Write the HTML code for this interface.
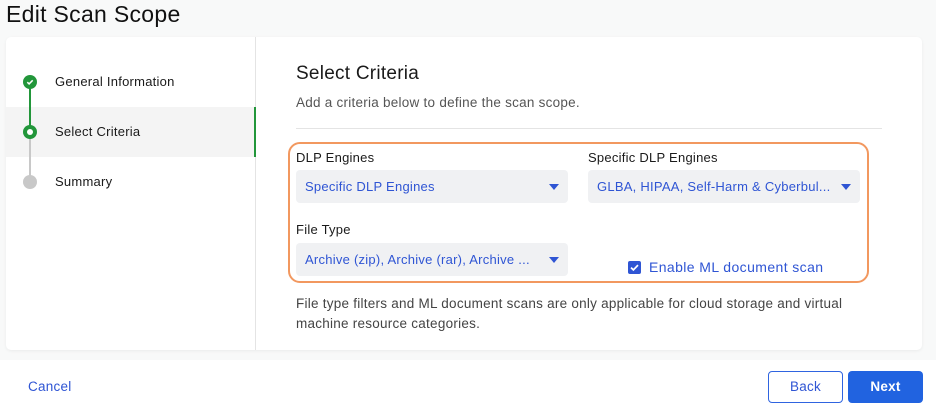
<!DOCTYPE html>
<html><head><style>
*{box-sizing:border-box;margin:0;padding:0}
body{width:936px;height:408px;background:#fff;font-family:"Liberation Sans",sans-serif;color:#1a1a1a;position:relative;overflow:hidden;letter-spacing:0.25px}
.bg{position:absolute;left:0;top:0;width:936px;height:360px;background:#f8f9f9}
h1{position:absolute;left:6px;top:1px;font-size:23px;font-weight:400;color:#111;letter-spacing:0.3px}
.card{position:absolute;left:6px;top:37px;width:916px;height:313px;background:#fff;border-radius:5px;box-shadow:0 1px 3px rgba(0,0,0,.06)}
.side{position:absolute;left:0;top:0;width:250px;height:313px;border-right:1px solid #e4e4e4}
.step{position:absolute;left:0;width:250px;height:50px;font-size:13px;line-height:50px;padding-left:49px}
.active{background:#f4f4f4;border-right:2px solid #22963a}
.dot{position:absolute;left:17px;width:14px;height:14px;border-radius:50%}
.line{position:absolute;left:23px;width:2px}
h2{position:absolute;left:290px;top:26px;font-size:19px;font-weight:400}
.sub{position:absolute;left:290px;top:58px;font-size:13.5px;color:#555}
.hr{position:absolute;left:290px;top:91px;width:586px;height:1px;background:#e4e4e4}
.box{position:absolute;left:282px;top:105px;width:581px;height:141px;border:2px solid #f2985f;border-radius:12px}
.lbl{position:absolute;font-size:13px;color:#1a1a1a}
.sel{position:absolute;height:33px;background:#f0f1f3;border-radius:4px;color:#2f55d4;font-size:13px;line-height:33px;padding-left:9px;white-space:nowrap}
.sel:after{content:"";position:absolute;right:9px;top:14px;border-left:5px solid transparent;border-right:5px solid transparent;border-top:6px solid #2f55d4}
.note{position:absolute;left:290px;top:257px;width:580px;font-size:13.5px;line-height:20px;color:#444}
.btn{position:absolute;top:371px;height:32px;border-radius:4px;font-size:13.5px;line-height:30px;text-align:center}
</style></head><body>
<div class="bg"></div>
<h1>Edit Scan Scope</h1>
<div class="card">
 <div class="side">
  <div class="step" style="top:20px">General Information</div>
  <div class="step active" style="top:70px">Select Criteria</div>
  <div class="step" style="top:120px">Summary</div>
  <div class="line" style="top:45px;height:50px;background:#22963a"></div>
  <div class="line" style="top:95px;height:50px;background:#c8c8c8"></div>
  <div class="dot" style="top:38px;background:#22963a"><svg width="14" height="14" viewBox="0 0 14 14" style="display:block"><path d="M4.3 7.2l1.8 1.7 3.6-3.6" stroke="#fff" stroke-width="1.5" fill="none"/></svg></div>
  <div class="dot" style="top:88px;background:#22963a"><div style="position:absolute;left:4px;top:4px;width:6px;height:6px;border-radius:50%;background:#fff"></div></div>
  <div class="dot" style="top:138px;background:#c8c8c8"></div>
 </div>
 <h2>Select Criteria</h2>
 <div class="sub">Add a criteria below to define the scan scope.</div>
 <div class="hr"></div>
 <div class="box"></div>
 <div class="lbl" style="left:290px;top:113px">DLP Engines</div>
 <div class="sel" style="left:290px;top:133px;width:272px">Specific DLP Engines</div>
 <div class="lbl" style="left:582px;top:113px">Specific DLP Engines</div>
 <div class="sel" style="left:582px;top:133px;width:272px">GLBA, HIPAA, Self-Harm &amp; Cyberbul...</div>
 <div class="lbl" style="left:290px;top:185px">File Type</div>
 <div class="sel" style="left:290px;top:206px;width:272px">Archive (zip), Archive (rar), Archive ...</div>
 <div style="position:absolute;left:622px;top:224px;width:13px;height:13px;background:#2f55d4;border-radius:2px"><svg width="13" height="13" viewBox="0 0 13 13" style="display:block"><path d="M3 6.6l2.4 2.3 4.6-4.8" stroke="#fff" stroke-width="1.7" fill="none"/></svg></div>
 <div class="lbl" style="left:643px;top:222px;color:#2f55d4;font-size:14px;letter-spacing:0.4px">Enable ML document scan</div>
 <div class="note">File type filters and ML document scans are only applicable for cloud storage and virtual machine resource categories.</div>
</div>
<div style="position:absolute;left:28px;top:379px;font-size:13.5px;color:#2f55d4">Cancel</div>
<div class="btn" style="left:768px;width:75px;border:1px solid #2f64e0;color:#2f55d4">Back</div>
<div class="btn" style="left:848px;width:75px;background:#2163e0;color:#fff;font-weight:700;line-height:32px">Next</div>
</body></html>
